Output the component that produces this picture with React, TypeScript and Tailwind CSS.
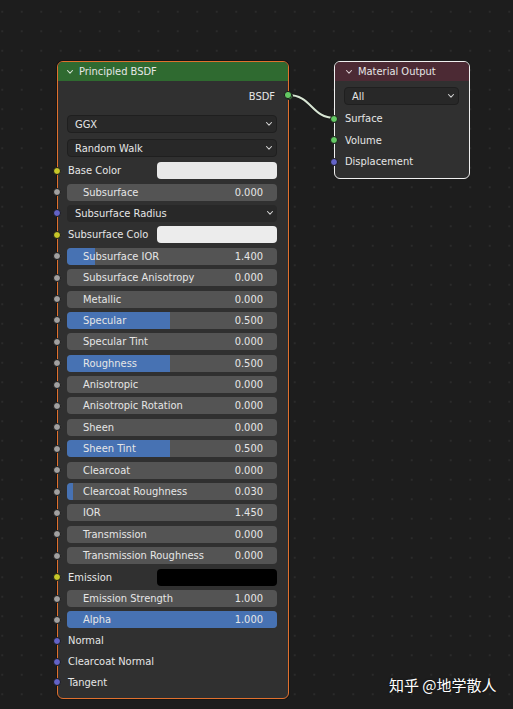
import React from "react"

type Sock = "gray" | "yellow" | "purple" | "green"

type Row =
  | { kind: "slider"; label: string; value: string; fill: number; sock: Sock }
  | { kind: "vector"; label: string; sock: Sock }
  | { kind: "color"; label: string; swatch: string; sock: Sock }
  | { kind: "socket"; label: string; sock: Sock }

const sockColor: Record<Sock, string> = {
  gray: "bg-[#a1a1a1]",
  yellow: "bg-[#c7c729]",
  purple: "bg-[#6363c7]",
  green: "bg-[#63c763]",
}

const inputs: Row[] = [
  { kind: "color", label: "Base Color", swatch: "bg-[#e9e9e9]", sock: "yellow" },
  { kind: "slider", label: "Subsurface", value: "0.000", fill: 0, sock: "gray" },
  { kind: "vector", label: "Subsurface Radius", sock: "purple" },
  { kind: "color", label: "Subsurface Colo", swatch: "bg-[#ececec]", sock: "yellow" },
  { kind: "slider", label: "Subsurface IOR", value: "1.400", fill: 0.135, sock: "gray" },
  { kind: "slider", label: "Subsurface Anisotropy", value: "0.000", fill: 0, sock: "gray" },
  { kind: "slider", label: "Metallic", value: "0.000", fill: 0, sock: "gray" },
  { kind: "slider", label: "Specular", value: "0.500", fill: 0.49, sock: "gray" },
  { kind: "slider", label: "Specular Tint", value: "0.000", fill: 0, sock: "gray" },
  { kind: "slider", label: "Roughness", value: "0.500", fill: 0.49, sock: "gray" },
  { kind: "slider", label: "Anisotropic", value: "0.000", fill: 0, sock: "gray" },
  { kind: "slider", label: "Anisotropic Rotation", value: "0.000", fill: 0, sock: "gray" },
  { kind: "slider", label: "Sheen", value: "0.000", fill: 0, sock: "gray" },
  { kind: "slider", label: "Sheen Tint", value: "0.500", fill: 0.49, sock: "gray" },
  { kind: "slider", label: "Clearcoat", value: "0.000", fill: 0, sock: "gray" },
  { kind: "slider", label: "Clearcoat Roughness", value: "0.030", fill: 0.028, sock: "gray" },
  { kind: "slider", label: "IOR", value: "1.450", fill: 0, sock: "gray" },
  { kind: "slider", label: "Transmission", value: "0.000", fill: 0, sock: "gray" },
  { kind: "slider", label: "Transmission Roughness", value: "0.000", fill: 0, sock: "gray" },
  { kind: "color", label: "Emission", swatch: "bg-[#000000]", sock: "yellow" },
  { kind: "slider", label: "Emission Strength", value: "1.000", fill: 0, sock: "gray" },
  { kind: "slider", label: "Alpha", value: "1.000", fill: 1, sock: "gray" },
  { kind: "socket", label: "Normal", sock: "purple" },
  { kind: "socket", label: "Clearcoat Normal", sock: "purple" },
  { kind: "socket", label: "Tangent", sock: "purple" },
]

function Socket({ c, side }: { c: Sock; side: "left" | "right" }) {
  return (
    <span
      className={`absolute top-1/2 -translate-y-1/2 w-[8px] h-[8px] rounded-full border border-[#1a1a1a] ${sockColor[c]} ${
        side === "left" ? "left-[-5px]" : "right-[-5px]"
      }`}
    />
  )
}

function Chevron({ className = "" }: { className?: string }) {
  return (
    <svg width="8" height="6" viewBox="0 0 8 6" className={className}>
      <path d="M1.5 1.5 L4 4.2 L6.5 1.5" fill="none" stroke="currentColor" strokeWidth="1.1" strokeLinecap="round" strokeLinejoin="round" />
    </svg>
  )
}

function Dropdown({ label }: { label: string }) {
  return (
    <div className="flex items-center justify-between h-[18px] w-full rounded-[4px] bg-[#282828] border border-[#1f1f1f] pl-[7px] pr-[3px] text-[#e6e6e6]">
      <span>{label}</span>
      <Chevron className="text-[#d0d0d0]" />
    </div>
  )
}

function InputRow({ row }: { row: Row }) {
  return (
    <div className={`relative flex items-center pl-[9px] pr-[11px] ${row.kind === "socket" ? "h-[20.7px]" : "h-[21.4px]"}`}>
      <Socket c={row.sock} side="left" />
      {row.kind === "slider" && (
        <div className="relative flex items-center justify-between h-[17px] w-full rounded-[4px] bg-[#545454] overflow-hidden pl-[16px] pr-[14px]">
          {row.fill > 0 && (
            <div className="absolute left-0 top-0 bottom-0 bg-[#4772b3]" style={{ width: `${row.fill * 100}%` }} />
          )}
          <span className="relative whitespace-nowrap">{row.label}</span>
          <span className="relative">{row.value}</span>
        </div>
      )}
      {row.kind === "vector" && (
        <div className="flex items-center justify-between h-[17px] w-full rounded-[4px] bg-[#282828] pl-[8px] pr-[3px]">
          <span>{row.label}</span>
          <Chevron className="text-[#d0d0d0]" />
        </div>
      )}
      {row.kind === "color" && (
        <div className="flex items-center w-full">
          <span className="w-[90px] pl-[1px] whitespace-nowrap overflow-hidden">{row.label}</span>
          <div className={`flex-1 h-[17px] rounded-[4px] ${row.swatch}`} />
        </div>
      )}
      {row.kind === "socket" && <span className="pl-[1px]">{row.label}</span>}
    </div>
  )
}

function PrincipledNode() {
  return (
    <div className="absolute left-[57px] top-[61px] w-[232px] h-[638px] rounded-[6px] border border-[#e0702e] bg-[#303030] shadow-[0_0_0_1px_#151515]">
      <div className="flex items-center gap-[5px] h-[19px] pl-[8px] bg-[#2f6a30] rounded-t-[5px] text-[#e6e6e6]">
        <Chevron className="text-[#cfe0cf]" />
        <span>Principled BSDF</span>
      </div>
      <div className="flex flex-col pt-[4px]">
        <div className="relative flex items-center justify-end h-[22px] pr-[13px]">
          <span>BSDF</span>
          <Socket c="green" side="right" />
        </div>
        <div className="h-[5px]" />
        <div className="flex items-center h-[24px] pl-[9px] pr-[11px]">
          <Dropdown label="GGX" />
        </div>
        <div className="flex items-center h-[24px] pl-[9px] pr-[11px]">
          <Dropdown label="Random Walk" />
        </div>
        {inputs.map((r) => (
          <InputRow key={r.label} row={r} />
        ))}
      </div>
    </div>
  )
}

function OutputNode() {
  return (
    <div className="absolute left-[334px] top-[61px] w-[136px] h-[118px] rounded-[6px] border border-[#f0f0f0] bg-[#303030]">
      <div className="flex items-center gap-[5px] h-[19px] pl-[10px] bg-[#4c2a34] rounded-t-[5px] text-[#e6e6e6]">
        <Chevron className="text-[#d8c8cc]" />
        <span>Material Output</span>
      </div>
      <div className="flex flex-col pt-[6px]">
        <div className="flex items-center h-[18px] pl-[9px] pr-[10px]">
          <Dropdown label="All" />
        </div>
        <div className="h-[3px]" />
        {[
          { l: "Surface", c: "green" as Sock },
          { l: "Volume", c: "green" as Sock },
          { l: "Displacement", c: "purple" as Sock },
        ].map((s) => (
          <div key={s.l} className="relative flex items-center h-[21.5px] pl-[10px]">
            <Socket c={s.c} side="left" />
            <span>{s.l}</span>
          </div>
        ))}
      </div>
    </div>
  )
}

export default function App() {
  return (
    <div
      className="relative w-[513px] h-[709px] overflow-hidden bg-[#1d1d1d] bg-[radial-gradient(circle,#2b2b2b_0.9px,transparent_1.4px)] bg-[size:19.5px_19.5px] bg-[position:-7.5px_2px] text-[11px] text-[#e6e6e6] leading-none"
      style={{ fontFamily: '"DejaVu Sans Condensed", "DejaVu Sans", "Noto Sans CJK SC", sans-serif' }}
    >
      <svg className="absolute inset-0" width="513" height="709">
        <path d="M288 95 C 312 95, 311 118, 335 118" fill="none" stroke="#1a1a1a" strokeWidth="4" />
        <path d="M288 95 C 312 95, 311 118, 335 118" fill="none" stroke="#d8e6d4" strokeWidth="2" />
      </svg>
      <PrincipledNode />
      <OutputNode />
      <svg className="absolute inset-0 pointer-events-none" width="513" height="709">
        <circle cx="288" cy="95" r="3.6" fill="#63c763" stroke="#1a1a1a" strokeWidth="1" />
      </svg>
      <div
        className="absolute left-[389px] top-[677px] text-[15px] text-white [text-shadow:0_0_2px_rgba(0,0,0,0.6)]"
        style={{ fontFamily: '"Noto Sans CJK SC", sans-serif' }}
      >
        知乎 @地学散人
      </div>
    </div>
  )
}
